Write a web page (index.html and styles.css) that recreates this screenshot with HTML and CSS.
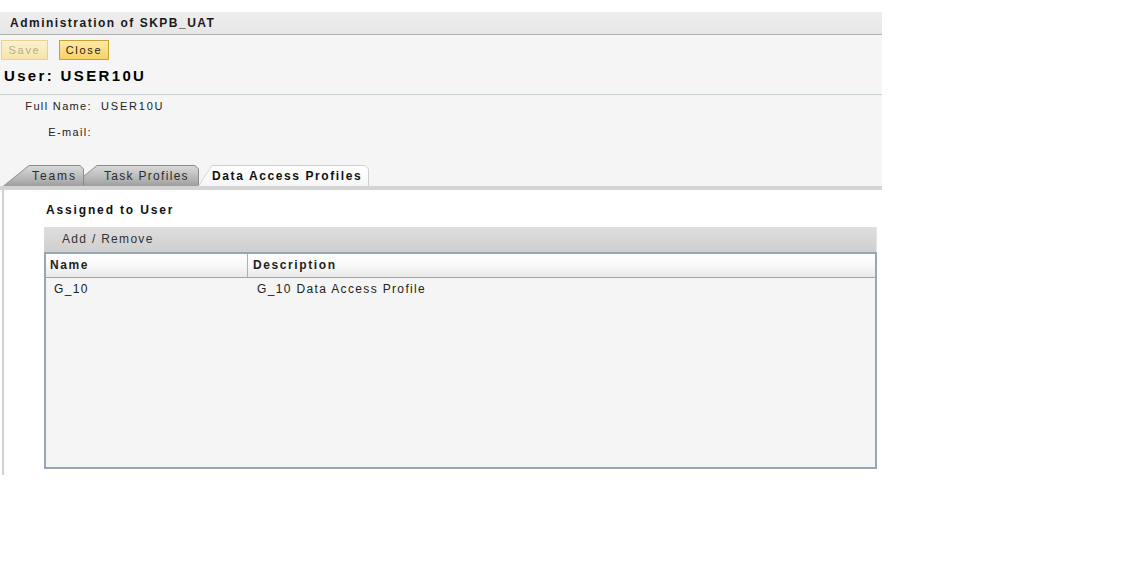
FILE: index.html
```html
<!DOCTYPE html>
<html lang="en">
<head>
<meta charset="utf-8">
<title>Administration of SKPB_UAT</title>
<link rel="stylesheet" href="styles.css">
</head>
<body>
<div class="app">
  <div class="titlebar">Administration of SKPB_UAT</div>
  <div class="panel">
    <div class="actions">
      <button class="btn btn-disabled" disabled>Save</button>
      <button class="btn btn-primary">Close</button>
    </div>
    <h1 class="user-title">User: USER10U</h1>
    <div class="fields">
      <span class="field-label">Full Name:</span><span class="field-value">USER10U</span>
      <span class="field-label">E-mail:</span><span class="field-value"></span>
    </div>
    <div class="tabs">
      <div class="tab tab-teams"><span class="tab-inner">Teams</span></div>
      <div class="tab tab-task"><span class="tab-inner">Task Profiles</span></div>
      <div class="tab tab-active"><span class="tab-inner">Data Access Profiles</span></div>
    </div>
  </div>
  <div class="tabstrip"></div>
  <div class="content">
    <div class="section-title">Assigned to User</div>
    <div class="grid-toolbar"><span class="link">Add / Remove</span></div>
    <div class="grid">
      <div class="grid-head">
        <div class="cell col-name">Name</div>
        <div class="cell col-desc">Description</div>
      </div>
      <div class="grid-row">
        <div class="cell col-name">G_10</div>
        <div class="cell col-desc">G_10 Data Access Profile</div>
      </div>
    </div>
  </div>
</div>
</body>
</html>
```
FILE: styles.css
```css
* { box-sizing: border-box; }
html, body { margin: 0; padding: 0; background: #ffffff; }
body {
  font-family: "Liberation Sans", Arial, sans-serif;
  font-size: 12px;
  color: #111;
}
.app { width: 882px; padding-top: 12px; }

.titlebar {
  height: 23px;
  line-height: 22px;
  padding-left: 10px;
  background: linear-gradient(#eeeeee, #e6e6e6);
  border-bottom: 1px solid #b4b4b4;
  font-weight: bold;
  letter-spacing: 1.5px;
  color: #1a1a1a;
}

.panel { background: #f5f5f5; padding-top: 5px; }

.actions { display: flex; gap: 11px; padding-left: 1px; }
.btn {
  height: 20px;
  padding: 0 4px;
  font-family: "Liberation Sans", Arial, sans-serif;
  font-size: 11px;
  letter-spacing: 1.7px;
  border-radius: 0;
  margin: 0;
}
.btn-disabled {
  width: 47px;
  background: linear-gradient(#fdf2cf, #f8e4a8);
  border: 1px solid #e6d18e;
  color: #b9ad8a;
}
.btn-primary {
  width: 50px;
  background: linear-gradient(#fde9a8, #f8d263);
  border: 1px solid #c9a12c;
  color: #2a1a1a;
}

.user-title {
  margin: 0;
  padding: 6px 4px 0;
  height: 35px;
  line-height: 20px;
  font-size: 15px;
  font-weight: bold;
  letter-spacing: 2.35px;
  color: #000;
  border-bottom: 1px solid #c8cfcf;
}

.fields {
  display: grid;
  grid-template-columns: 92px auto;
  column-gap: 9px;
  row-gap: 10px;
  padding-top: 3px;
  font-size: 11px;
  line-height: 16px;
  color: #222;
}
.field-label { text-align: right; letter-spacing: 1.35px; }
.field-value { letter-spacing: 1.8px; }

.tabs {
  display: flex;
  align-items: flex-end;
  height: 21px;
  margin-top: 25px;
  padding-left: 3px;
}
.tab {
  position: relative;
  height: 21px;
  background: #8a8a8a;
  clip-path: polygon(0 100%, 26px 0, calc(100% - 4px) 0, 100% 4px, 100% 100%);
  padding: 1px 1px 0 1px;
}
.tab-inner {
  display: block;
  height: 20px;
  line-height: 21px;
  background: linear-gradient(#d9d9d9, #b2b2b2 70%, #9d9d9d);
  clip-path: polygon(0 100%, 25px 0, calc(100% - 3px) 0, 100% 3px, 100% 100%);
  color: #2c2c2c;
  letter-spacing: 1.3px;
  white-space: nowrap;
}
.tab-teams { z-index: 3; width: 81px; }
.tab-teams .tab-inner { padding-left: 28px; letter-spacing: 1.9px; }
.tab-task { z-index: 2; width: 128px; margin-left: -13px; }
.tab-task .tab-inner { padding-left: 32px; }
.tab-active {
  z-index: 4;
  width: 171px;
  margin-left: -1px;
  background: #cfcfcf;
  clip-path: polygon(0 100%, 14px 0, calc(100% - 4px) 0, 100% 4px, 100% 100%);
}
.tab-active .tab-inner {
  background: linear-gradient(#ffffff, #f6f6f6);
  clip-path: polygon(0 100%, 13px 0, calc(100% - 3px) 0, 100% 3px, 100% 100%);
  padding-left: 13px;
  color: #111;
  font-weight: bold;
  letter-spacing: 1.6px;
}

.tabstrip { height: 4px; background: #d4d4d4; }

.content {
  height: 285px;
  margin-left: 2px;
  border-left: 2px solid #d0d0d0;
  background: #ffffff;
  padding: 12px 5px 0 42px;
}
.section-title {
  line-height: 16px;
  font-weight: bold;
  letter-spacing: 1.85px;
  color: #111;
  margin-bottom: 9px;
}
.grid-toolbar {
  margin-left: -2px;
  height: 25px;
  line-height: 25px;
  padding-left: 18px;
  background: linear-gradient(#dedede, #cfcfcf);
  border-right: 1px solid #e6e6e6;
  letter-spacing: 1.3px;
  color: #333;
}
.grid {
  margin-left: -2px;
  height: 217px;
  border: 2px solid #98a5b2;
  background: #f5f5f5;
}
.grid-head {
  display: flex;
  height: 24px;
  background: linear-gradient(#ffffff, #f8f8f8 50%, #e9e9e9);
  border-bottom: 1px solid #9ba6b1;
}
.grid-head .cell { line-height: 23px; color: #222; font-weight: bold; letter-spacing: 1.6px; }
.grid-head .col-name { border-right: 1px solid #a9b2bb; padding-left: 4px; }
.grid-head .col-desc { padding-left: 5px; }
.col-name { width: 202px; }
.col-desc { flex: 1; }
.grid-row { display: flex; height: 22px; }
.grid-row .cell { line-height: 22px; letter-spacing: 1.35px; color: #222; }
.grid-row .col-name { padding-left: 8px; }
.grid-row .col-desc { padding-left: 9px; }
```
